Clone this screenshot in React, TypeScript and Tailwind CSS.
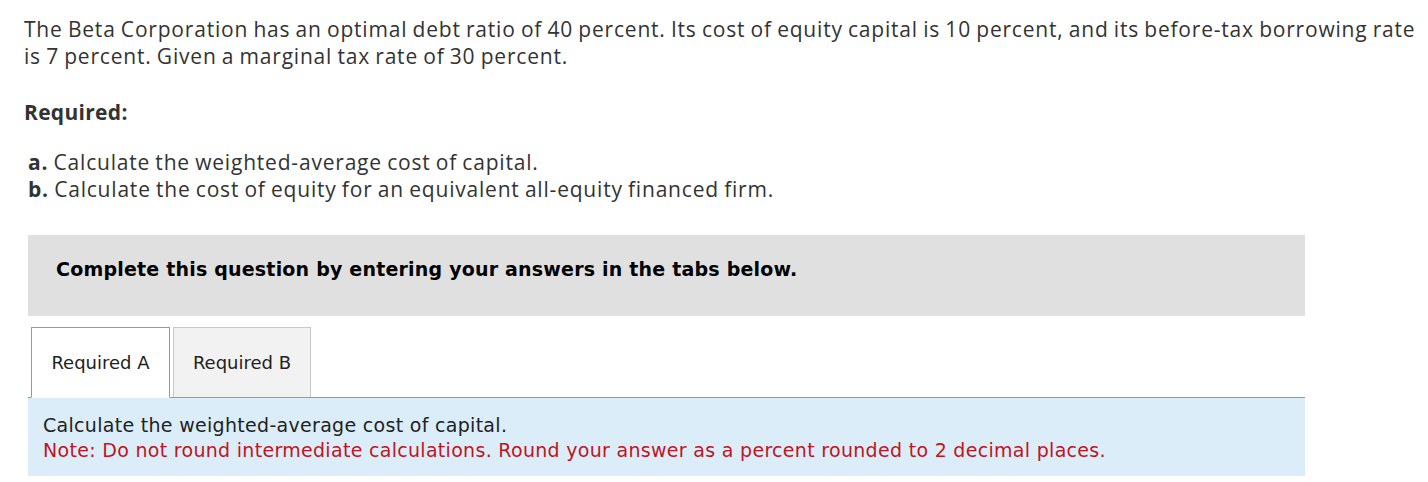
export default function App() {
  return (
    <div className="w-[1428px] h-[482px] bg-white overflow-hidden">
      <div className="pl-[24px] pr-[12px] pt-[16px] font-['Open_Sans',sans-serif] text-[21px] tracking-[0.8px] [word-spacing:-1px] leading-[27px] text-[#333]">
        <p>
          The Beta Corporation has an optimal debt ratio of 40 percent. Its cost of equity capital is 10 percent, and its before-tax borrowing rate is 7 percent. Given a marginal tax rate of 30 percent.
        </p>
        <p className="mt-[29px] font-bold tracking-[0.3px]">Required:</p>
        <div className="mt-[23px] pl-[4px]">
          <p>
            <b>a.</b> Calculate the weighted-average cost of capital.
          </p>
          <p>
            <b>b.</b> Calculate the cost of equity for an equivalent all-equity financed firm.
          </p>
        </div>
      </div>

      <div className="ml-[28px] w-[1277px] mt-[32px] font-['DejaVu_Sans',Verdana,sans-serif]">
        <div className="h-[81px] bg-[#e0e0e0] pl-[28px] pt-[23px]">
          <p className="font-bold text-[19px] leading-[22px] tracking-[0.2px] text-black">
            Complete this question by entering your answers in the tabs below.
          </p>
        </div>

        <div className="mt-[11px] flex items-end gap-[3px] pl-[3px] border-b border-[#999]">
          <div className="w-[139px] h-[71px] -mb-px bg-white border border-[#999] border-b-white flex items-center justify-center text-[18px] text-[#222]">
            Required A
          </div>
          <div className="w-[138px] h-[70px] bg-[#f2f2f2] border border-[#c8c8c8] border-b-0 flex items-center justify-center text-[18px] text-[#222]">
            Required B
          </div>
        </div>

        <div className="h-[78px] bg-[#dbedf9] pl-[15px] pt-[15px] text-[19px] tracking-[0.3px] leading-[25px]">
          <p className="text-[#222]">Calculate the weighted-average cost of capital.</p>
          <p className="text-[#c0141e]">
            Note: Do not round intermediate calculations. Round your answer as a percent rounded to 2 decimal places.
          </p>
        </div>
      </div>
    </div>
  );
}
